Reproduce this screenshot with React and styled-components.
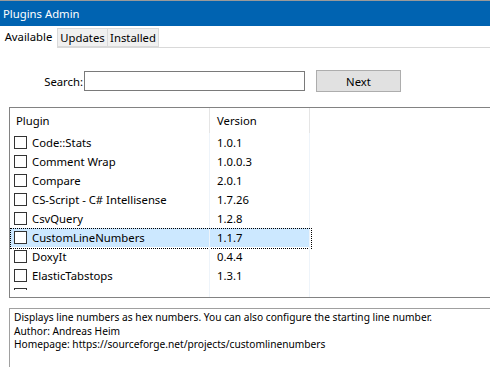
import React from "react"
import styled, { createGlobalStyle } from "styled-components"

const GlobalStyle = createGlobalStyle`
  html, body {
    margin: 0;
    padding: 0;
    background: #fff;
  }
  * {
    box-sizing: border-box;
  }
`

const Window = styled.div`
  width: 490px;
  height: 367px;
  overflow: hidden;
  display: flex;
  flex-direction: column;
  font-family: "Segoe UI", "Noto Sans", sans-serif;
  font-size: 11.3px;
  color: #000;
  background: #fff;
`

const TitleBar = styled.div`
  height: 26px;
  flex: none;
  border-top: 1px solid #9a9a9a;
  background: #0063b1;
  color: #fff;
  display: flex;
  align-items: center;
  padding: 0 0 1px 3px;
`

const TabStrip = styled.div`
  height: 22px;
  flex: none;
  display: flex;
  align-items: flex-end;
  border-bottom: 1px solid #d9d9d9;
`

const Tab = styled.div`
  height: ${({ $active }) => ($active ? "22px" : "19px")};
  width: ${({ $w }) => $w}px;
  flex: none;
  display: flex;
  align-items: center;
  justify-content: center;
  background: ${({ $active }) => ($active ? "#fff" : "#f0f0f0")};
  border: 1px solid ${({ $active }) => ($active ? "#fff" : "#d9d9d9")};
  border-left-width: ${({ $active }) => ($active ? "0" : "1px")};
  border-right-width: ${({ $active }) => ($active ? "0" : "1px")};
  margin-left: ${({ $joined }) => ($joined ? "-1px" : "0")};
  margin-bottom: ${({ $active }) => ($active ? "-1px" : "0")};
  padding-bottom: ${({ $active }) => ($active ? "2px" : "0")};
`

const Panel = styled.div`
  flex: 1;
  padding: 22px 0 0 9px;
  display: flex;
  flex-direction: column;
`

const SearchRow = styled.div`
  display: flex;
  align-items: center;
  height: 22px;
`

const SearchLabel = styled.label`
  width: 75px;
  text-align: right;
  padding-right: 1px;
`

const SearchInput = styled.div`
  width: 221px;
  height: 20px;
  border: 1px solid #7a7a7a;
  background: #fff;
`

const Button = styled.div`
  width: 85px;
  height: 22px;
  margin-left: 11px;
  border: 1px solid #adadad;
  background: #e1e1e1;
  display: flex;
  align-items: center;
  justify-content: center;
`

const ListBox = styled.div`
  margin-top: 15px;
  width: 500px;
  height: 191px;
  flex: none;
  border: 1px solid #828282;
  display: flex;
  flex-direction: column;
`

const ListBody = styled.div`
  height: 157px;
  overflow: hidden;
`

const ListFill = styled.div`
  flex: 1;
  display: grid;
  grid-template-columns: 200px 100px 1fr;
`

const Row = styled.div`
  display: grid;
  grid-template-columns: 200px 100px 1fr;
  height: ${({ $header }) => ($header ? "25px" : "19px")};
  position: relative;
  &::after {
    content: "";
    display: ${({ $selected }) => ($selected ? "block" : "none")};
    position: absolute;
    left: 0;
    top: 0;
    width: 300px;
    height: 19px;
    border: 1px dotted #000;
  }
`

const Cell = styled.div`
  display: flex;
  align-items: center;
  padding-left: ${({ $pad }) => $pad}px;
  border-right: 1px solid ${({ $header }) => ($header ? "#e5e5e5" : "#eef4fa")};
  background: ${({ $selected }) => ($selected ? "#cce8ff" : "transparent")};
  white-space: nowrap;
  padding-bottom: 1px;
`

const Check = styled.span`
  width: 13px;
  height: 13px;
  flex: none;
  border: 1px solid #333;
  background: #fff;
  margin-right: 5px;
`

const Description = styled.div`
  margin-top: 10px;
  width: 500px;
  flex: 1;
  margin-bottom: -20px;
  border: 1px solid #a0a0a0;
  padding: 2px 4px;
  font-size: 10.2px;
  line-height: 13.5px;
`

const plugins = [
  ["Code::Stats", "1.0.1"],
  ["Comment Wrap", "1.0.0.3"],
  ["Compare", "2.0.1"],
  ["CS-Script - C# Intellisense", "1.7.26"],
  ["CsvQuery", "1.2.8"],
  ["CustomLineNumbers", "1.1.7"],
  ["DoxyIt", "0.4.4"],
  ["ElasticTabstops", "1.3.1"],
  ["", ""],
]

export default function App() {
  return (
    <Window>
      <GlobalStyle />
      <TitleBar>Plugins Admin</TitleBar>
      <TabStrip>
        <Tab $active $w={57}>Available</Tab>
        <Tab $w={51}>Updates</Tab>
        <Tab $w={52} $joined>Installed</Tab>
      </TabStrip>
      <Panel>
        <SearchRow>
          <SearchLabel>Search:</SearchLabel>
          <SearchInput />
          <Button>Next</Button>
        </SearchRow>
        <ListBox>
          <Row $header>
            <Cell $header $pad={6}>Plugin</Cell>
            <Cell $header $pad={7}>Version</Cell>
            <Cell $header $pad={0} />
          </Row>
          <ListBody>
            {plugins.map(([name, version], i) => {
              const selected = name === "CustomLineNumbers"
              return (
                <Row key={i} $selected={selected}>
                  <Cell $pad={4} $selected={selected}>
                    <Check />
                    {name}
                  </Cell>
                  <Cell $pad={7} $selected={selected}>{version}</Cell>
                  <Cell $pad={0} />
                </Row>
              )
            })}
          </ListBody>
          <ListFill>
            <Cell $pad={0} />
            <Cell $pad={0} />
            <Cell $pad={0} />
          </ListFill>
        </ListBox>
        <Description>
          Displays line numbers as hex numbers. You can also configure the starting line number.
          <br />
          Author: Andreas Heim
          <br />
          Homepage: https://sourceforge.net/projects/customlinenumbers
        </Description>
      </Panel>
    </Window>
  )
}
